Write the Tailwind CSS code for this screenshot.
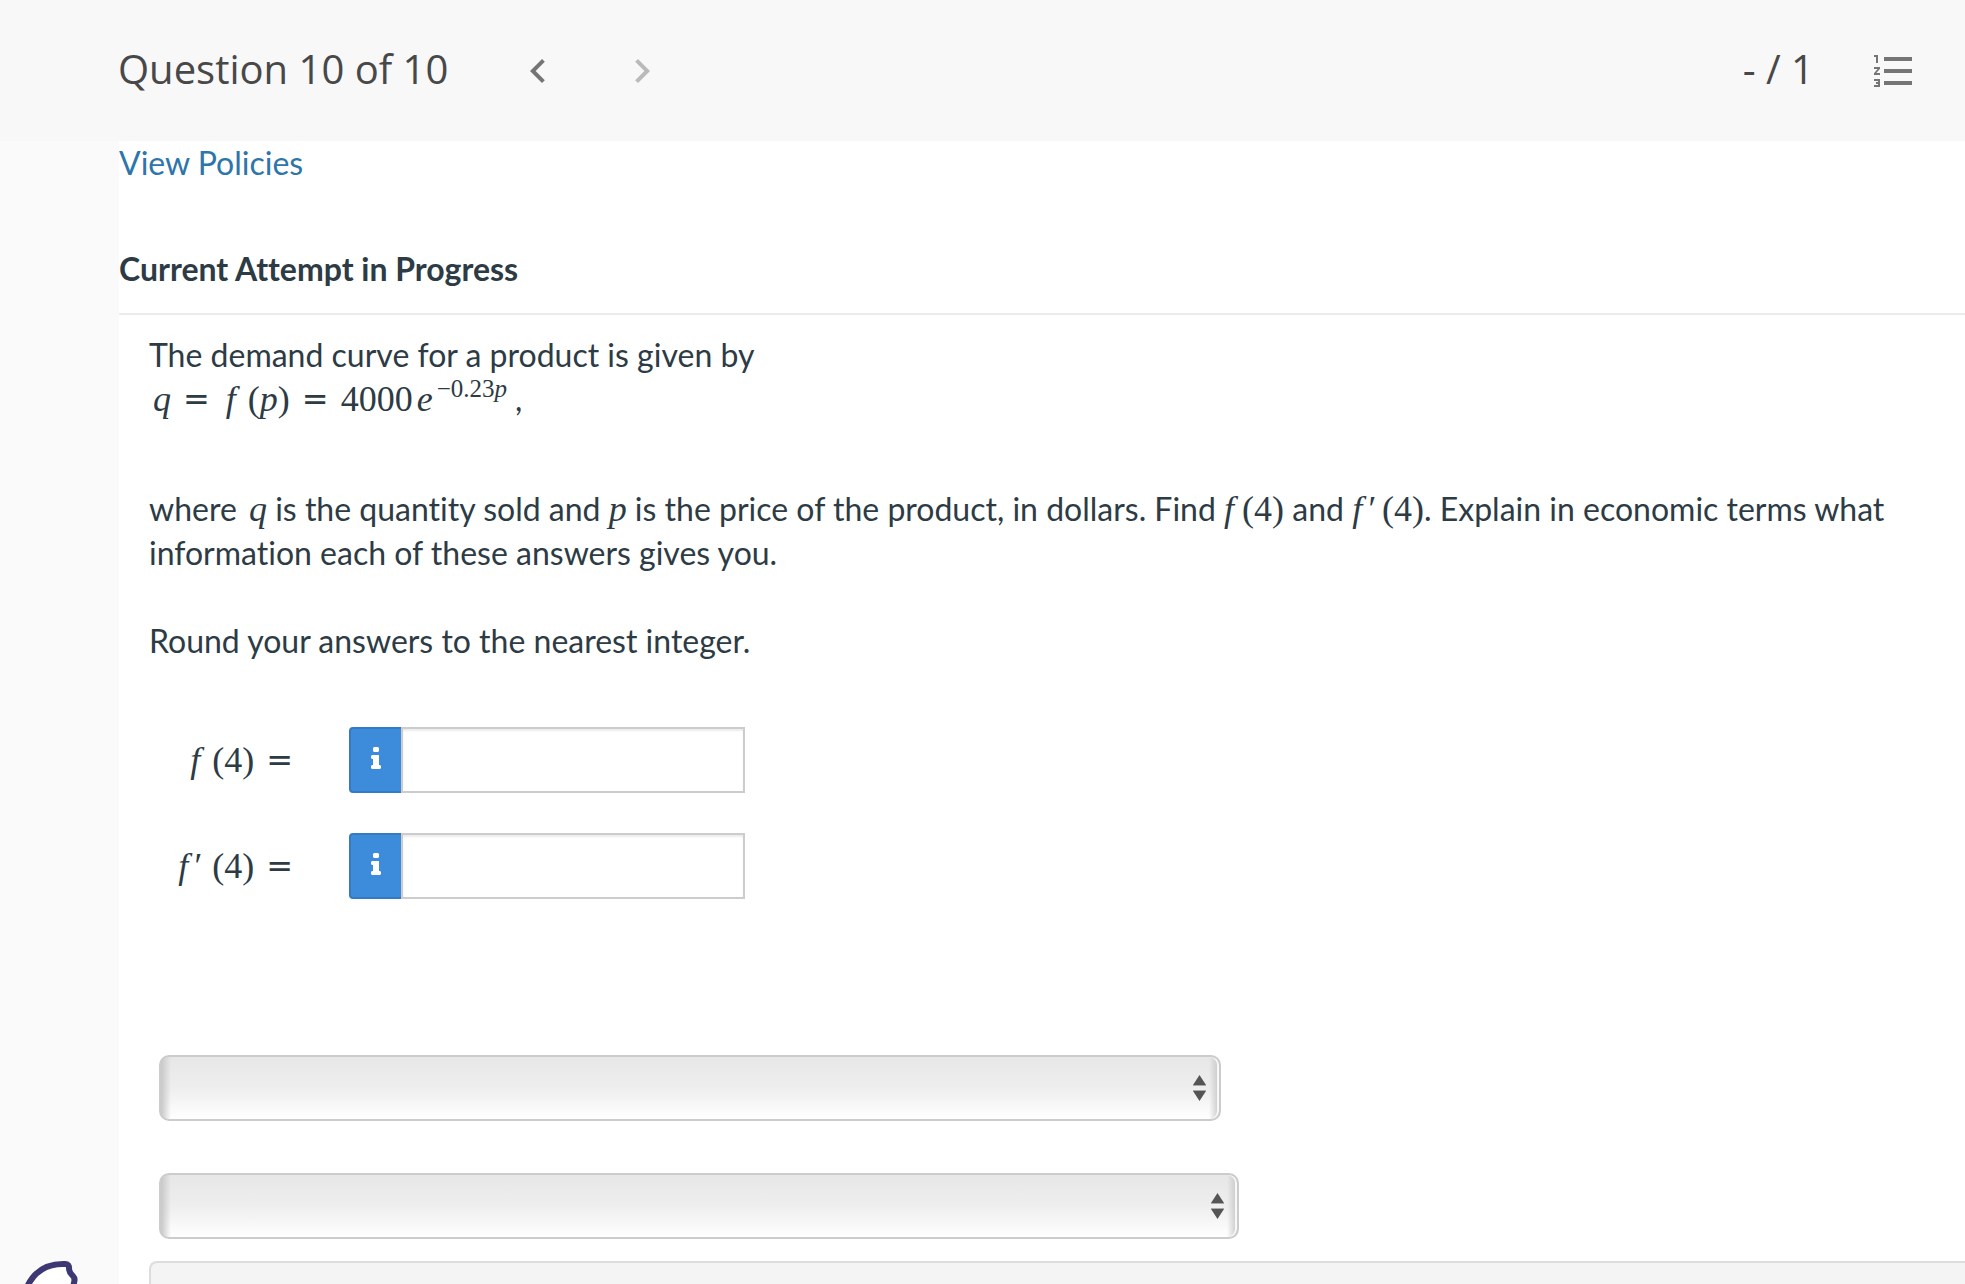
<!DOCTYPE html>
<html lang="en">
<head>
    <meta charset="UTF-8">
    <meta name="viewport" content="width=device-width, initial-scale=1.0">
    <title>Question 10 of 10</title>
    <script src="https://cdn.jsdelivr.net/npm/@tailwindcss/browser@4"></script>
</head>
<body class="flex flex-col h-screen overflow-hidden bg-white font-['Lato',sans-serif] text-[32px] leading-[44px] text-[#2d3b45] [font-variant-ligatures:none]">
    <!-- Header -->
    <header class="flex items-center justify-between shrink-0 h-[141px] pl-[118px] pr-[47px] bg-[#f8f8f8] font-['Open_Sans',sans-serif] text-[#484848]">
        <div class="flex items-center">
            <h1 class="pb-1 text-[40px]">Question 10 of 10</h1>
            <nav class="flex gap-14 ml-[66px]">
                <button type="button" aria-label="Previous question" class="text-[#757575]">
                    <svg class="size-12" viewBox="0 0 24 24" fill="currentColor"><path d="M15.41 7.41 14 6l-6 6 6 6 1.41-1.41L10.83 12z"/></svg>
                </button>
                <button type="button" aria-label="Next question" class="text-[#bababa]" disabled>
                    <svg class="size-12" viewBox="0 0 24 24" fill="currentColor"><path d="M10 6 8.59 7.41 13.17 12l-4.58 4.59L10 18l6-6z"/></svg>
                </button>
            </nav>
        </div>
        <div class="flex items-center gap-14">
            <span class="pb-1 text-[40px]">- / 1</span>
            <button type="button" aria-label="Question list" class="text-[#757575]">
                <svg class="size-12" viewBox="0 0 24 24" fill="currentColor"><path d="M2 17h2v.5H3v1h1v.5H2v1h3v-4H2v1zm1-9h1V4H2v1h1v3zm-1 3h1.8L2 13.1v.9h3v-1H3.2L5 10.9V10H2v1zm5-6v2h14V5H7zm0 14h14v-2H7v2zm0-6h14v-2H7v2z"/></svg>
            </button>
        </div>
    </header>

    <div class="flex flex-1 min-h-0">
        <!-- Sidebar -->
        <aside class="relative shrink-0 w-[119px] bg-[#fafafa]">
            <svg class="absolute left-[15px] bottom-0 w-20 h-[34px]" viewBox="0 0 80 34" fill="#fff" stroke="#3d3874" stroke-width="6" stroke-linejoin="round"><path d="M12 37C19 22 32 13 51 14c2 0 3 2 3 4 0 5 2 6 4 8 3 3 1 6 0 11"/></svg>
        </aside>

        <main class="flex flex-col flex-1 min-w-0">
            <a href="#" class="self-start text-[#2d75ab]">View Policies</a>
            <h2 class="mt-[62px] pb-[22px] border-b-2 border-[#ebebeb] font-bold">Current Attempt in Progress</h2>

            <form class="flex flex-col flex-1 min-h-0 pl-[30px] pt-[18px]">
                <p>The demand curve for a product is given by</p>
                <p class="flex items-center h-11 font-['Liberation_Serif',serif] text-[36px] whitespace-nowrap">
                    <i class="ml-1">q</i><span class="mx-3 font-['DejaVu_Sans',sans-serif] text-[32px]">=</span><i class="ml-1 mr-3">f</i>(<i>p</i>)<span class="mx-3 font-['DejaVu_Sans',sans-serif] text-[32px]">=</span>4000<i class="ml-1">e</i><span class="ml-1 pb-5 text-[25px]">−0.23<i>p</i></span><span class="ml-2 font-['Lato',sans-serif] text-[32px]">,</span>
                </p>
                <p class="mt-[66px] pr-10">where <i class="ml-1 font-['Liberation_Serif',serif] text-[36px] leading-none">q</i> is the quantity sold and <i class="font-['Liberation_Serif',serif] text-[36px] leading-none">p</i> is the price of the product, in dollars. Find <span class="font-['Liberation_Serif',serif] text-[36px] leading-none whitespace-nowrap"><i class="mr-2">f</i>(4)</span> and <span class="font-['Liberation_Serif',serif] text-[36px] leading-none whitespace-nowrap"><i>f</i><i class="ml-1 mr-2">′</i>(4)</span>. Explain in economic terms what information each of these answers gives you.</p>
                <p class="mt-11">Round your answers to the nearest integer.</p>

                <!-- Numeric answers -->
                <div class="grid grid-cols-[200px_396px] gap-y-10 mt-16">
                    <label for="f4" class="flex items-center justify-end pr-14 whitespace-nowrap font-['Liberation_Serif',serif] text-[36px]"><i class="mr-3">f</i>(4)<span class="ml-3 font-['DejaVu_Sans',sans-serif] text-[32px]">=</span></label>
                    <div class="flex h-[66px]">
                        <button type="button" aria-label="Answer format" class="flex items-center justify-center w-[52px] pb-1 rounded-l border-2 border-r-0 border-[#347bc4] bg-[#3d8cdc] text-white">
                            <svg class="w-3 h-[22px]" viewBox="0 0 12 22" fill="currentColor"><path d="M4 0h4l1 1v3L8 5H4L3 4V1zM2 8h7v10h1l1 1v2l-1 1H2l-1-1v-2l1-1h1v-6H2l-1-1V9z"/></svg>
                        </button>
                        <input id="f4" type="text" class="flex-1 min-w-0 px-3 border-2 border-[#cccccc] bg-white shadow-[inset_0_2px_2px_rgba(0,0,0,0.08)] outline-none">
                    </div>
                    <label for="fp4" class="flex items-center justify-end pr-14 whitespace-nowrap font-['Liberation_Serif',serif] text-[36px]"><i>f</i><i class="ml-1 mr-3">′</i>(4)<span class="ml-3 font-['DejaVu_Sans',sans-serif] text-[32px]">=</span></label>
                    <div class="flex h-[66px]">
                        <button type="button" aria-label="Answer format" class="flex items-center justify-center w-[52px] pb-1 rounded-l border-2 border-r-0 border-[#347bc4] bg-[#3d8cdc] text-white">
                            <svg class="w-3 h-[22px]" viewBox="0 0 12 22" fill="currentColor"><path d="M4 0h4l1 1v3L8 5H4L3 4V1zM2 8h7v10h1l1 1v2l-1 1H2l-1-1v-2l1-1h1v-6H2l-1-1V9z"/></svg>
                        </button>
                        <input id="fp4" type="text" class="flex-1 min-w-0 px-3 border-2 border-[#cccccc] bg-white shadow-[inset_0_2px_2px_rgba(0,0,0,0.08)] outline-none">
                    </div>
                </div>

                <!-- Interpretation drop-downs -->
                <div class="relative shrink-0 w-[1062px] max-w-full ml-[10px] mt-[156px]">
                    <select aria-label="Meaning of f(4)" class="block appearance-none w-full h-[66px] px-4 rounded-[10px] border-2 border-[#cccccc] bg-[linear-gradient(to_right,#c8c8c8,transparent_10px,transparent_calc(100%-10px),#c8c8c8),linear-gradient(#e7e7e7,#eeeeee_50%,#ffffff)] shadow-[inset_-2px_0_0_#f8f8f8]">
                        <option></option>
                    </select>
                    <svg class="absolute right-[15px] top-5 w-[13px] h-[26px] pointer-events-none" viewBox="0 0 13 26"><path fill="#555" d="M6.5 0 13 10H0zM0 16h13L6.5 26z"/><path fill="#aaa" d="M0 10h13v1H0zM0 15h13v1H0z"/></svg>
                </div>
                <div class="relative shrink-0 w-[1080px] max-w-full ml-[10px] mt-[52px]">
                    <select aria-label="Meaning of f′(4)" class="block appearance-none w-full h-[66px] px-4 rounded-[10px] border-2 border-[#cccccc] bg-[linear-gradient(to_right,#c8c8c8,transparent_10px,transparent_calc(100%-10px),#c8c8c8),linear-gradient(#e7e7e7,#eeeeee_50%,#ffffff)] shadow-[inset_-2px_0_0_#f8f8f8]">
                        <option></option>
                    </select>
                    <svg class="absolute right-[15px] top-5 w-[13px] h-[26px] pointer-events-none" viewBox="0 0 13 26"><path fill="#555" d="M6.5 0 13 10H0zM0 16h13L6.5 26z"/><path fill="#aaa" d="M0 10h13v1H0zM0 15h13v1H0z"/></svg>
                </div>

                <!-- Attempts panel -->
                <div class="flex-1 mt-[22px] rounded-tl-lg border-t-2 border-l-2 border-[#dddddd] bg-[#f4f4f4]"></div>
            </form>
        </main>
    </div>
</body>
</html>
